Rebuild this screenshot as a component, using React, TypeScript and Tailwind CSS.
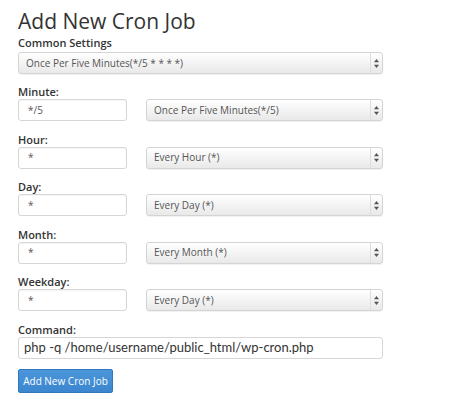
import type { ReactNode } from "react";

const rows = [
  { label: "Minute:", value: "*/5", option: "Once Per Five Minutes(*/5)" },
  { label: "Hour:", value: "*", option: "Every Hour (*)" },
  { label: "Day:", value: "*", option: "Every Day (*)" },
  { label: "Month:", value: "*", option: "Every Month (*)" },
  { label: "Weekday:", value: "*", option: "Every Day (*)" },
];

function Arrows() {
  return (
    <svg width="5" height="9" viewBox="0 0 5 9" className="fill-[#555]">
      <polygon points="2.5,0 5,3.2 0,3.2" />
      <polygon points="0,5.8 5,5.8 2.5,9" />
    </svg>
  );
}

function Select({ children, className }: { children: ReactNode; className?: string }) {
  return (
    <div
      className={
        "flex h-[22px] items-stretch rounded-[3px] border border-[#d4d4d4] bg-gradient-to-b from-white to-[#e9e9e9] shadow-[0_1px_1px_rgba(0,0,0,0.06)] " +
        (className ?? "")
      }
    >
      <span className="flex flex-1 items-center truncate pl-[7px] text-[10px] text-[#555]">
        {children}
      </span>
      <span className="flex w-[12px] items-center justify-center border-l border-[#dedede]">
        <Arrows />
      </span>
    </div>
  );
}

function Label({ children, className }: { children: ReactNode; className?: string }) {
  return (
    <div className={"text-[11px] font-semibold leading-[13px] text-[#333] " + (className ?? "")}>
      {children}
    </div>
  );
}

export default function App() {
  return (
    <div className="h-[405px] w-[474px] bg-white pl-[18px] pt-[6px] font-['Open_Sans',sans-serif] text-[#333]">
      <h1 className="text-[21px] font-normal leading-[30px] text-[#333]">Add New Cron Job</h1>

      <Label>Common Settings</Label>
      <Select className="mt-[3px] w-[365px]">Once Per Five Minutes(*/5 * * * *)</Select>

      {rows.map((row, i) => (
        <div key={row.label} className={i === 0 ? "mt-[11px]" : "mt-[11.5px]"}>
          <Label>{row.label}</Label>
          <div className="mt-[1px] flex w-[365px] items-center gap-[19px]">
            <div className="flex h-[22px] w-[109px] items-center rounded-[3px] border border-[#d6d6d6] bg-white pl-[9px] text-[10px] text-[#555] shadow-[inset_0_1px_1px_rgba(0,0,0,0.04)]">
              {row.value}
            </div>
            <Select className="flex-1">{row.option}</Select>
          </div>
        </div>
      ))}

      <Label className="mt-[12px]">Command:</Label>
      <div className="mt-[1px] flex h-[22px] w-[365px] items-center rounded-[3px] border border-[#d6d6d6] bg-white pl-[5px] font-['Lato',sans-serif] text-[13px] text-[#333]">
        php -q /home/username/public_html/wp-cron.php
      </div>

      <button className="mt-[10px] h-[24px] w-[95px] rounded-[2px] border border-[#2f78bd] bg-gradient-to-b from-[#4b95da] to-[#3b86cf] text-[10px] font-medium text-white">
        Add New Cron Job
      </button>
    </div>
  );
}
